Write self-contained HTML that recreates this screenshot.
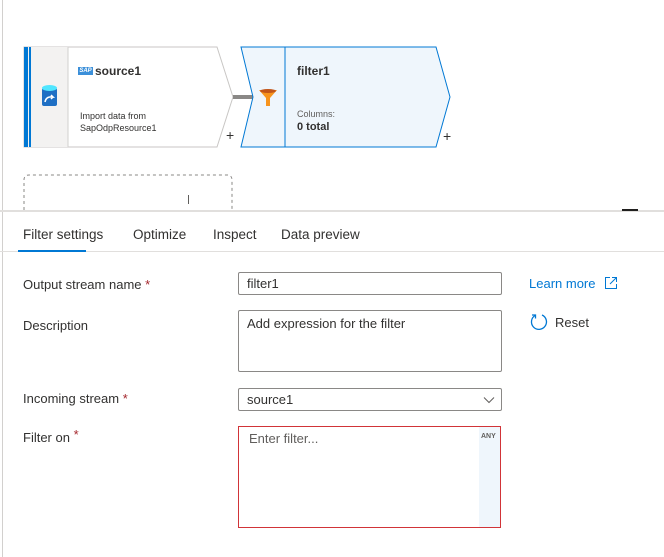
<!DOCTYPE html>
<html><head><meta charset="utf-8">
<style>
body{margin:0;width:664px;height:557px;background:#fff;position:relative;overflow:hidden;font-family:"Liberation Sans",sans-serif;color:#323130}
.a{position:absolute;white-space:nowrap}
.lbl{font-size:13px;color:#323130}
.req{color:#a4262c}
.box{position:absolute;border:1px solid #8a8886;border-radius:2px;box-sizing:border-box;background:#fff}
</style></head><body>
<div class="a" style="left:2px;top:0;width:1px;height:557px;background:#d2d0ce"></div>
<svg class="a" style="left:0;top:0" width="664" height="215">
  <polygon points="24,47 217,47 233,97 217,147 24,147" fill="#fff" stroke="#c8c6c4"/>
  <rect x="24" y="47" width="44" height="100" fill="#f3f2f1"/>
  <rect x="24" y="47" width="4" height="100" fill="#0078d4"/>
  <rect x="29" y="47" width="2" height="100" fill="#0078d4"/>
  <line x1="68" y1="47" x2="68" y2="147" stroke="#d2d0ce"/>
  <rect x="42" y="88" width="15" height="18" rx="2" fill="#1e6fc4"/>
  <ellipse cx="49.5" cy="88" rx="7.5" ry="3" fill="#50e6ff"/>
  <path d="M45 102 q1-6 8-5 l-2-2 m2 2 l-2 2" stroke="#fff" stroke-width="1.5" fill="none"/>
  <rect x="233" y="95" width="20" height="4" fill="#8a8886"/>
  <polygon points="241,47 436,47 450,97 436,147 241,147 253,97" fill="#eff6fc" stroke="#0078d4"/>
  <line x1="285" y1="47" x2="285" y2="147" stroke="#0078d4"/>
  <path d="M259 90 h18 l-7 8 v8 h-4 v-8 z" fill="#f7941d"/>
  <ellipse cx="268" cy="91" rx="8" ry="2" fill="#c2561a"/>
  <path d="M24 210 V180 q0-5 5-5 H227 q5 0 5 5 V210" fill="none" stroke="#8a8886" stroke-dasharray="3,3"/>
  <line x1="188.5" y1="195" x2="188.5" y2="204" stroke="#605e5c"/>
  <rect x="0" y="210" width="664" height="2" fill="#e1dfdd"/>
  <rect x="622" y="209" width="16" height="2" fill="#201f1e"/>
</svg>
<div class="a" style="left:78px;top:67px;width:15px;height:8px;background:#3b8fd9;font-size:6px;line-height:8px;color:#fff;font-weight:bold;font-style:italic;text-align:center">SAP</div>
<div class="a" style="left:95px;top:64px;font-size:12px;font-weight:bold">source1</div>
<div class="a" style="left:80px;top:110px;font-size:9px;line-height:12px">Import data from<br>SapOdpResource1</div>
<div class="a" style="left:226px;top:127px;font-size:14px">+</div>
<div class="a" style="left:297px;top:64px;font-size:12px;font-weight:bold">filter1</div>
<div class="a" style="left:297px;top:109px;font-size:9px;color:#605e5c">Columns:</div>
<div class="a" style="left:297px;top:121px;font-size:11px;font-weight:bold">0 total</div>
<div class="a" style="left:443px;top:128px;font-size:14px">+</div>

<div class="a" style="left:0;top:251px;width:664px;height:1px;background:#e1dfdd"></div>
<div class="a" style="left:23px;top:227px;font-size:13.5px">Filter settings</div>
<div class="a" style="left:18px;top:250px;width:68px;height:2px;background:#0078d4"></div>
<div class="a" style="left:133px;top:227px;font-size:13.5px">Optimize</div>
<div class="a" style="left:213px;top:227px;font-size:13.5px">Inspect</div>
<div class="a" style="left:281px;top:227px;font-size:13.5px">Data preview</div>

<div class="a lbl" style="left:23px;top:277px">Output stream name <span class="req">*</span></div>
<div class="box" style="left:238px;top:272px;width:264px;height:23px"></div>
<div class="a" style="left:247px;top:276px;font-size:13px">filter1</div>
<div class="a" style="left:529px;top:276px;font-size:13px;color:#0078d4">Learn more</div>
<svg class="a" style="left:604px;top:276px" width="14" height="14"><path d="M6 1.5H1.5v11h11V8" stroke="#0078d4" fill="none"/><path d="M8 1.5h4.5V6M12.5 1.5L6 8" stroke="#0078d4" fill="none"/></svg>

<div class="a lbl" style="left:23px;top:318px">Description</div>
<div class="box" style="left:238px;top:310px;width:264px;height:62px"></div>
<div class="a" style="left:247px;top:316px;font-size:13px">Add expression for the filter</div>
<svg class="a" style="left:529px;top:312px" width="20" height="20"><path d="M6 3.5A7.5 7.5 0 1 0 13 3" stroke="#0078d4" stroke-width="1.3" fill="none"/><path d="M3 3h3.5v3.5" stroke="#0078d4" stroke-width="1.3" fill="none"/></svg>
<div class="a" style="left:555px;top:315px;font-size:13px">Reset</div>

<div class="a lbl" style="left:23px;top:391px">Incoming stream <span class="req">*</span></div>
<div class="box" style="left:238px;top:388px;width:264px;height:23px"></div>
<div class="a" style="left:247px;top:392px;font-size:13px">source1</div>
<svg class="a" style="left:483px;top:396px" width="12" height="8"><path d="M1 1.5l5 5 5-5" stroke="#605e5c" fill="none"/></svg>

<div class="a lbl" style="left:23px;top:430px">Filter on <span class="req" style="position:relative;top:-3px">*</span></div>
<div class="a" style="left:238px;top:426px;width:263px;height:102px;border:1px solid #d13438;box-sizing:border-box"></div>
<div class="a" style="left:479px;top:427px;width:21px;height:100px;background:#eff6fc"></div>
<div class="a" style="left:481px;top:433px;font-size:7px;font-weight:bold;color:#605e5c">ANY</div>
<div class="a" style="left:249px;top:431px;font-size:13px;color:#605e5c">Enter filter...</div>
</body></html>
